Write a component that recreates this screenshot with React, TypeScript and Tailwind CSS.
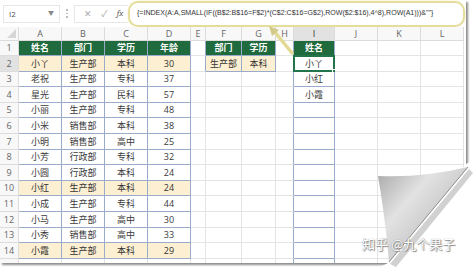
import React from "react";

// column widths: row header, A..L
const COLS = [
  "w-[19px]",
  "w-[43px]",
  "w-[43px]",
  "w-[43px]",
  "w-[43px]",
  "w-[15px]",
  "w-[36px]",
  "w-[34px]",
  "w-[18px]",
  "w-[41px]",
  "w-[43px]",
  "w-[43px]",
  "w-[43px]",
];
const LETTERS = ["", "A", "B", "C", "D", "E", "F", "G", "H", "I", "J", "K", "L"];

const people: string[][] = [
  ["小丫", "生产部", "本科", "30"],
  ["老祝", "生产部", "专科", "37"],
  ["星光", "生产部", "民科", "57"],
  ["小丽", "生产部", "专科", "48"],
  ["小米", "销售部", "本科", "38"],
  ["小明", "销售部", "高中", "25"],
  ["小芳", "行政部", "专科", "32"],
  ["小圆", "行政部", "本科", "24"],
  ["小红", "生产部", "本科", "24"],
  ["小成", "生产部", "专科", "44"],
  ["小马", "生产部", "高中", "30"],
  ["小秀", "销售部", "高中", "33"],
  ["小霞", "生产部", "本科", "29"],
];
const marked = [2, 10, 14];
const found = ["小丫", "小红", "小霞"];

interface Info {
  text: string;
  kind: "head" | "hl" | "plain";
  table: boolean;
}

const info = (r: number, c: number): Info => {
  if (c >= 1 && c <= 4 && r >= 1 && r <= 14) {
    if (r === 1) return { text: ["姓名", "部门", "学历", "年龄"][c - 1], kind: "head", table: true };
    return { text: people[r - 2][c - 1], kind: marked.includes(r) ? "hl" : "plain", table: true };
  }
  if ((c === 6 || c === 7) && (r === 1 || r === 2)) {
    if (r === 1) return { text: c === 6 ? "部门" : "学历", kind: "head", table: true };
    return { text: c === 6 ? "生产部" : "本科", kind: "hl", table: true };
  }
  if (c === 9 && r >= 1) {
    if (r === 1) return { text: "姓名", kind: "head", table: true };
    return { text: found[r - 2] ?? "", kind: "plain", table: true };
  }
  return { text: "", kind: "plain", table: false };
};

const Cell = ({ r, c }: { r: number; c: number }) => {
  const me = info(r, c);
  const right = me.table || (c < 12 && info(r, c + 1).table);
  const below = me.table || info(r + 1, c).table;
  const bg =
    me.kind === "head"
      ? "bg-[#1f6b3d] text-white font-bold"
      : me.kind === "hl"
        ? "bg-[#fdf0d2] text-[#333]"
        : "bg-white text-[#3a3a3a]";
  return (
    <div
      className={`${COLS[c]} relative shrink-0 h-full flex items-center justify-center border-r border-b ${
        right ? "border-r-[#9aabcb]" : "border-r-[#e4e4e4]"
      } ${below ? "border-b-[#9aabcb]" : "border-b-[#e4e4e4]"} ${bg}`}
    >
      {me.text}
      {r === 2 && c === 9 && (
        <div className="absolute -left-[1px] -top-[1px] -right-[1px] -bottom-[1px] border-2 border-[#23744a]">
          <div className="absolute -right-[3px] -bottom-[3px] w-[4px] h-[4px] bg-[#23744a] border border-white" />
        </div>
      )}
    </div>
  );
};

const FormulaBar = () => (
  <div className="h-[27px] shrink-0 flex items-center bg-white text-[#555]">
    <div className="ml-[3px] w-[57px] h-[18px] flex items-center justify-between px-[5px] border border-[#e6e6e6] text-[8px]">
      <span>I2</span>
      <span className="text-[6px] text-[#888]">▼</span>
    </div>
    <div className="w-[14px] flex flex-col items-center gap-[2px]">
      <span className="w-[1.5px] h-[1.5px] bg-[#bbb]" />
      <span className="w-[1.5px] h-[1.5px] bg-[#bbb]" />
      <span className="w-[1.5px] h-[1.5px] bg-[#bbb]" />
    </div>
    <div className="w-[54px] h-[18px] flex items-center justify-around pl-[4px] border border-[#e6e6e6] border-r-0 text-[#aaa] text-[9px]">
      <span>✕</span>
      <span>✓</span>
      <span className="italic font-serif text-[#666] text-[9px]">fx</span>
    </div>
    <div className="flex-1 mr-[1px] h-[26px] flex items-center px-[7px] rounded-[10px] border-[2.5px] border-[#e4dd9c] shadow-[0_0_2px_#efe9b8] text-[#333] text-[7.05px] whitespace-nowrap font-['Liberation_Sans',sans-serif]">
      {'{=INDEX(A:A,SMALL(IF((B$2:B$16=F$2)*(C$2:C$16=G$2),ROW($2:$16),4^8),ROW(A1)))&""}'}
    </div>
  </div>
);

const ColumnHeads = () => (
  <div className="h-[13.5px] shrink-0 flex text-[9px] text-[#666]">
    {LETTERS.map((l, i) => (
      <div
        key={i}
        className={`${COLS[i]} shrink-0 h-full flex items-center justify-center border-r border-b border-[#dcdcdc] relative ${
          i === 9 ? "bg-[#e2e2e2] text-[#333]" : "bg-[#f8f8f8]"
        }`}
      >
        {i === 0 ? (
          <span className="absolute right-[2px] bottom-[2px] w-0 h-0 border-l-[9px] border-l-transparent border-b-[9px] border-b-[#d6d6d6]" />
        ) : (
          l
        )}
      </div>
    ))}
  </div>
);

// annotation arrow and the peeled page corner, drawn over the sheet
const Overlay = () => (
  <div className="absolute inset-0 z-10 pointer-events-none">
    <svg width="474" height="269" viewBox="0 0 474 269" style={{ display: "block" }}>
      <defs>
        <linearGradient id="curlFill" x1="378" y1="175" x2="432" y2="222" gradientUnits="userSpaceOnUse">
          <stop offset="0" stopColor="#adadad" />
          <stop offset="0.55" stopColor="#e2e2e2" />
          <stop offset="1" stopColor="#cbcbcb" />
        </linearGradient>
      </defs>
      <polygon points="466,164 474,160 474,269 376,269 388,263" fill="#ffffff" />
      <path d="M469 169 L390 264 L396 267 L473 173 Z" fill="#9a9a9a" opacity="0.45" />
      <path d="M378 176 Q422 178 468 167 L389 262 Q385 216 378 176 Z" fill="url(#curlFill)" />
      <path d="M468 167 L389 262" stroke="#8d8d8d" strokeWidth="1" />
      <path d="M274 31 L292 53" stroke="#e2da94" strokeWidth="3.5" strokeLinecap="round" />
      <polygon points="269,26 279,30 272,36" fill="#d2ca88" />
    </svg>
  </div>
);

export default function App() {
  return (
    <div className="relative w-[474px] h-[269px] bg-white overflow-hidden font-['Open_Sans','Noto_Sans_CJK_SC',sans-serif]">
      <div className="w-[466px] h-[263px] flex flex-col overflow-hidden shadow-[2px_2px_2px_rgba(0,0,0,0.45)]">
        <FormulaBar />
        <ColumnHeads />
        <div className="flex flex-col text-[9px]">
          {Array.from({ length: 15 }, (_, k) => k + 1).map((r) => (
            <div key={r} className="h-[15.6px] shrink-0 flex">
              <div
                className={`${COLS[0]} shrink-0 h-full flex items-center justify-center border-r border-b border-[#dcdcdc] text-[#666] ${
                  r === 2 ? "bg-[#e2e2e2]" : "bg-[#f8f8f8]"
                }`}
              >
                {r < 15 ? r : ""}
              </div>
              {Array.from({ length: 12 }, (_, k) => k + 1).map((c) => (
                <Cell key={c} r={r} c={c} />
              ))}
            </div>
          ))}
        </div>
      </div>
      <Overlay />
      <div className="absolute z-20 left-[362px] top-[237px] text-[13px] leading-none text-white [text-shadow:0_0_1px_#777,1px_1px_1px_#888] font-['Noto_Sans_CJK_SC',sans-serif]">
        知乎 @九个果子
      </div>
    </div>
  );
}
